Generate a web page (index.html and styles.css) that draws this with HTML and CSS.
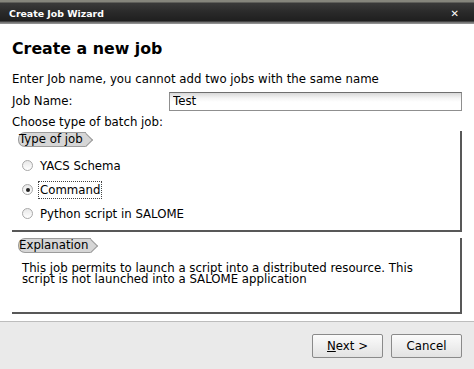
FILE: index.html
```html
<!DOCTYPE html>
<html lang="en">
<head>
    <meta charset="UTF-8">
    <title>Create Job Wizard</title>
    <link rel="stylesheet" href="styles.css">
</head>
<body>
    <div class="window">
        <div class="titlebar">
            <span class="title">Create Job Wizard</span>
            <span class="close">&#x2715;</span>
        </div>

        <div class="page">
            <h1>Create a new job</h1>
            <p class="intro">Enter Job name, you cannot add two jobs with the same name</p>

            <div class="name-row">
                <label for="jobName">Job Name:</label>
                <input type="text" id="jobName" value="Test">
            </div>

            <p class="choose">Choose type of batch job:</p>

            <div class="group group-type">
                <span class="tag">Type of job</span>
                <div class="options">
                    <label class="option"><span class="radio"></span><span>YACS Schema</span></label>
                    <label class="option"><span class="radio checked"></span><span class="focus">Command</span></label>
                    <label class="option"><span class="radio"></span><span>Python script in SALOME</span></label>
                </div>
            </div>

            <div class="group group-explain">
                <span class="tag">Explanation</span>
                <p class="explain">This job permits to launch a script into a distributed resource. This script is not launched into a SALOME application</p>
            </div>
        </div>

        <div class="footer">
            <button class="btn"><u>N</u>ext &gt;</button>
            <button class="btn">Cancel</button>
        </div>
    </div>
</body>
</html>
```

FILE: styles.css
```css
html, body {
    margin: 0;
    background: #fff;
}
body {
    font-family: "DejaVu Sans", sans-serif;
    font-size: 11.75px;
    color: #000;
}
.window {
    width: 474px;
    height: 369px;
    display: flex;
    flex-direction: column;
    overflow: hidden;
}

/* title bar */
.titlebar {
    height: 24px;
    box-sizing: border-box;
    display: flex;
    align-items: center;
    justify-content: space-between;
    padding: 2px 15px 0 9px;
    background: linear-gradient(#85857c 0, #85857c 2px, #3a3a3a 3px, #2a2a2a 12px, #1f1f1f 21px, #6a6a6a 22px, #9a9a9a 24px);
}
.title {
    color: #fff;
    font-weight: bold;
    font-size: 9.4px;
}
.close {
    color: #fff;
    font-weight: bold;
    font-size: 10px;
}

/* page */
.page {
    flex: 1;
    padding: 0 12px;
}
h1 {
    margin: 15px 0 0;
    font-size: 15.8px;
    line-height: 20px;
}
.intro {
    margin: 12px 0 0;
    line-height: 17px;
}
.name-row {
    display: flex;
    align-items: center;
    margin-top: 3px;
    height: 20px;
}
.name-row label {
    width: 157px;
}
.name-row input {
    width: 293px;
    height: 19px;
    box-sizing: border-box;
    border: 1px solid #8f8f8f;
    border-top-color: #6f6f6f;
    padding: 0 3px;
    font-family: "DejaVu Sans", sans-serif;
    font-size: 11.75px;
    background: linear-gradient(#d8d8d8, #f4f4f4 5px, #fff 9px, #fff);
}
.choose {
    margin: 3px 0 0;
    line-height: 17px;
}

/* group boxes */
.group {
    border-right: 2px solid #585858;
    border-bottom: 2px solid #585858;
    box-sizing: border-box;
}
.group-type {
    height: 101px;
    padding-top: 1px;
}
.group-explain {
    height: 76px;
    margin-top: 6px;
}
.tag {
    position: relative;
    z-index: 0;
    display: inline-block;
    margin-left: 6px;
    height: 13px;
    line-height: 13px;
    padding: 0 3px 0 0;
    background: #d6d6d6;
    border: 1px solid #9c9c9c;
    border-right: none;
    border-radius: 7px 0 0 7px;
}
.tag::after {
    content: '';
    position: absolute;
    right: -5px;
    top: 2px;
    width: 9px;
    height: 9px;
    background: #d6d6d6;
    border-top: 1px solid #9c9c9c;
    border-right: 1px solid #9c9c9c;
    transform: rotate(45deg);
    z-index: -1;
}
.options {
    display: flex;
    flex-direction: column;
    gap: 5px;
    margin-top: 9px;
    padding-left: 10px;
}
.option {
    display: flex;
    align-items: center;
    height: 19px;
}
.radio {
    width: 9px;
    height: 9px;
    border: 1px solid #a8a8a8;
    border-radius: 50%;
    background: linear-gradient(#e8e8e8, #fff);
    margin-right: 7px;
    position: relative;
}
.radio.checked::after {
    content: '';
    position: absolute;
    left: 2.5px;
    top: 2.5px;
    width: 4px;
    height: 4px;
    border-radius: 50%;
    background: #222;
}
.focus {
    border: 1px dotted #444;
    padding: 1px 1px;
    margin-left: -2px;
}
.explain {
    margin: 10px 0 0 10px;
    line-height: 11px;
    padding-right: 20px;
}

/* footer */
.footer {
    height: 48px;
    box-sizing: border-box;
    border-top: 1px solid #bdbdbd;
    background: #eaeaea;
    display: flex;
    justify-content: flex-end;
    align-items: flex-start;
    gap: 8px;
    padding: 12px 12px 0 0;
}
.btn {
    height: 24px;
    width: 71px;
    font-family: "DejaVu Sans", sans-serif;
    font-size: 11.75px;
    color: #000;
    border: 1px solid #8a8a8a;
    border-radius: 2px;
    background: linear-gradient(#fbfbfb, #e2e2e2);
    padding: 0;
}
```
